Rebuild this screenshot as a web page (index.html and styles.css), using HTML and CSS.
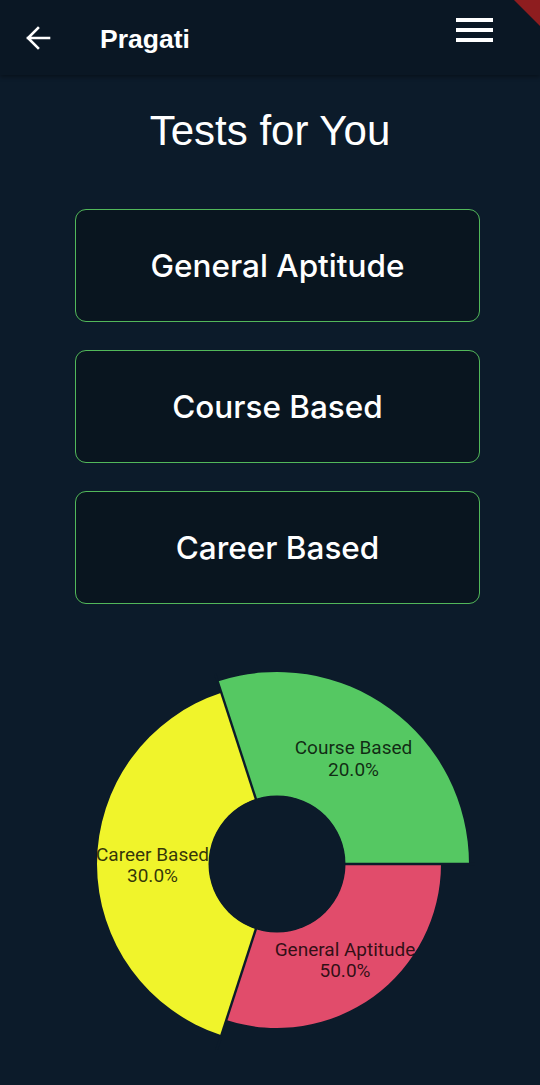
FILE: index.html
```html
<!DOCTYPE html>
<html lang="en">
<head>
<meta charset="utf-8">
<title>Pragati</title>
<link rel="stylesheet" href="styles.css">
</head>
<body>
<header class="appbar">
  <svg class="back" viewBox="0 0 26 26" width="26" height="26" aria-hidden="true">
    <path d="M24 13H3M13 3L3 13L13 23" fill="none" stroke="#fff" stroke-width="2.6" stroke-linecap="square" stroke-linejoin="miter"/>
  </svg>
  <span class="brand">Pragati</span>
  <svg class="menu" viewBox="0 0 37 24" width="37" height="24" aria-hidden="true">
    <rect x="0" y="0" width="37" height="4" fill="#fff"/>
    <rect x="0" y="10" width="37" height="4" fill="#fff"/>
    <rect x="0" y="20" width="37" height="4" fill="#fff"/>
  </svg>
  <svg class="corner" viewBox="0 0 26 26" width="26" height="26" aria-hidden="true">
    <polygon points="0,0 26,0 26,26" fill="#8e1d1f"/>
  </svg>
</header>
<main class="content">
  <h1 class="title">Tests for You</h1>
  <div class="tests">
    <button class="test">General Aptitude</button>
    <button class="test">Course Based</button>
    <button class="test">Career Based</button>
  </div>
  <svg class="chart" viewBox="0 630 540 420" width="540" height="420">
    <path d="M217.67 681.40 A192 192 0 0 1 469 864 L345 864 A68 68 0 0 0 255.99 799.33 Z" fill="#55c862"/>
    <path d="M441 864 A164 164 0 0 1 226.32 1019.97 L255.99 928.67 A68 68 0 0 0 345 864 Z" fill="#e14c6b"/>
    <path d="M221.38 1035.19 A180 180 0 0 1 221.38 692.81 L255.99 799.33 A68 68 0 0 0 255.99 928.67 Z" fill="#f0f42b"/>
    <g stroke="#0c1b2a" stroke-width="2.4">
      <line x1="277" y1="864" x2="475" y2="864"/>
      <line x1="277" y1="864" x2="215.2" y2="1054.2"/>
      <line x1="277" y1="864" x2="215.2" y2="673.8"/>
    </g>
    <circle cx="277" cy="864" r="68.5" fill="#0c1b2a"/>
    <g class="label">
      <text x="353.5" y="754">Course Based</text>
      <text x="353.5" y="776">20.0%</text>
      <text x="152.5" y="860.5">Career Based</text>
      <text x="152.5" y="882">30.0%</text>
      <text x="345" y="955.5">General Aptitude</text>
      <text x="345" y="977">50.0%</text>
    </g>
  </svg>
</main>
</body>
</html>
```
FILE: styles.css
```css
* { box-sizing: border-box; }

html, body {
  margin: 0;
  padding: 0;
  background: #0c1b2a;
}

body {
  width: 540px;
  min-height: 1085px;
  font-family: "Liberation Sans", Arial, sans-serif;
  color: #fff;
  overflow: hidden;
}

.appbar {
  position: relative;
  height: 75px;
  background: #0a1724;
  display: flex;
  align-items: center;
  box-shadow: 0 2px 4px rgba(0, 0, 0, 0.35);
}

.back {
  display: block;
  margin-left: 25px;
  margin-top: 1px;
}

.brand {
  margin-left: 49px;
  font-size: 26.5px;
  font-weight: 700;
  line-height: 30px;
  margin-top: 3px;
}

.menu {
  display: block;
  margin-left: auto;
  margin-right: 47px;
  align-self: flex-start;
  margin-top: 18px;
}

.corner {
  position: absolute;
  top: 0;
  right: 0;
  display: block;
}

.content {
  display: flex;
  flex-direction: column;
}

.title {
  margin: 32px 0 0;
  font-size: 42px;
  font-weight: 400;
  line-height: 48px;
  text-align: center;
}

.tests {
  margin: 54px 0 0 75px;
  width: 405px;
  display: flex;
  flex-direction: column;
  gap: 28px;
}

.test {
  height: 113px;
  width: 100%;
  background: #09151f;
  border: 1.3px solid #52b85a;
  border-radius: 11px;
  color: #fff;
  font-family: "Inter", "Liberation Sans", sans-serif;
  font-size: 31.5px;
  font-weight: 500;
  padding: 0;
  cursor: pointer;
}

.chart {
  display: block;
  margin-top: 26px;
}

.label text {
  font-family: "Roboto", "Liberation Sans", sans-serif;
  font-size: 19px;
  fill: rgba(0, 0, 0, 0.8);
  text-anchor: middle;
}
```
